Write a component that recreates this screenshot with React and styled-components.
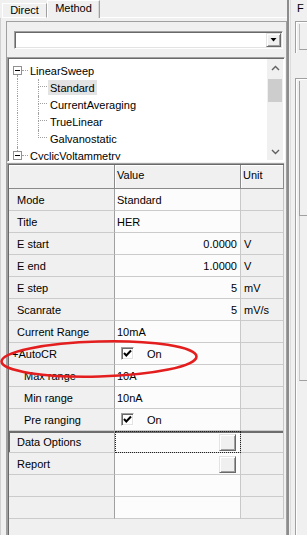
import React from 'react';
import styled, { createGlobalStyle } from 'styled-components';

const GlobalStyle = createGlobalStyle`
  html, body { margin: 0; padding: 0; background: #f0f0f0; }
  body {
    font-family: "Liberation Sans", Arial, sans-serif;
    font-size: 11px;
    color: #000;
  }
  #root { width: 307px; height: 535px; overflow: hidden; }
  * { box-sizing: border-box; }
`;

const Window = styled.div`
  position: relative;
  display: flex;
  width: 307px;
  height: 535px;
  overflow: hidden;
  background: #f0f0f0;
`;

const LeftPane = styled.div`
  display: flex;
  flex-direction: column;
  width: 287px;
  flex-shrink: 0;
`;

const TabStrip = styled.div`
  display: flex;
  align-items: flex-end;
  height: 18px;
  padding-left: 2px;
`;

const Tab = styled.div`
  display: flex;
  align-items: center;
  justify-content: center;
  width: ${(p) => p.$w}px;
  height: ${(p) => (p.$active ? 18 : 15)}px;
  padding-bottom: ${(p) => (p.$active ? 3 : 1)}px;
  background: #f0f0f0;
  border-top: 1px solid #fff;
  border-left: 1px solid #fff;
  border-right: 1px solid #a0a0a0;
  border-bottom: ${(p) => (p.$active ? 'none' : '1px solid #fff')};
  box-shadow: ${(p) => (p.$active ? 'inset -1px 0 0 #d8d8d8' : 'none')};
`;

const TabFill = styled.div`
  flex: 1;
  height: 18px;
  border-bottom: 1px solid #fff;
`;

const Page = styled.div`
  flex: 1;
  display: flex;
  flex-direction: column;
  min-height: 0;
  border-left: 1px solid #d0d0d0;
  padding: 3px 0 0 5px;
`;

const Panel = styled.div`
  flex: 1;
  display: flex;
  flex-direction: column;
  min-height: 0;
  border-top: 1px solid #a0a0a0;
  border-left: 1px solid #a0a0a0;
  border-right: 1px solid #a0a0a0;
`;

const Combo = styled.div`
  display: flex;
  align-items: center;
  justify-content: flex-end;
  height: 18px;
  margin: 9px 3px 8px 7px;
  padding-right: 1px;
  background: #fff;
  border-top: 1px solid #a0a0a0;
  border-left: 1px solid #a0a0a0;
  border-right: 1px solid #fff;
  border-bottom: 1px solid #fff;
  box-shadow: inset 1px 1px 0 #696969, inset -1px -1px 0 #e3e3e3;
`;

const ComboButton = styled.div`
  display: flex;
  align-items: center;
  justify-content: center;
  width: 15px;
  height: 14px;
  background: #f0f0f0;
  border-top: 1px solid #e3e3e3;
  border-left: 1px solid #e3e3e3;
  border-right: 1px solid #696969;
  border-bottom: 1px solid #696969;
  box-shadow: inset 1px 1px 0 #fff, inset -1px -1px 0 #a0a0a0;
`;

const TreeBox = styled.div`
  display: flex;
  height: 105px;
  margin-right: 1px;
  padding: 1px;
  background: #fff;
  border-top: 1px solid #a0a0a0;
  border-left: 1px solid #a0a0a0;
  border-right: 1px solid #fff;
  border-bottom: 1px solid #fff;
  box-shadow: inset 1px 1px 0 #696969;
  overflow: hidden;
`;

const TreeList = styled.div`
  flex: 1;
  padding-top: 3px;
  overflow: hidden;
`;

const TreeRow = styled.div`
  display: flex;
  align-items: stretch;
  height: 17px;
  padding-left: ${(p) => p.$pad}px;
  white-space: nowrap;
`;

const BoxCol = styled.div`
  display: flex;
  flex-direction: column;
  align-items: flex-start;
  width: 9px;
`;

const VSeg = styled.div`
  margin-left: 4px;
  border-left: 1px dotted ${(p) => (p.$on ? '#a0a0a0' : 'transparent')};
  height: ${(p) => (p.$h ? `${p.$h}px` : 'auto')};
  flex: ${(p) => (p.$h ? '0 0 auto' : '1')};
`;

const ExpandBox = styled.div`
  display: flex;
  align-items: center;
  justify-content: center;
  width: 9px;
  height: 9px;
  border: 1px solid #919191;
  background: #fff;
  &::before {
    content: '';
    width: 5px;
    height: 1px;
    background: #000;
  }
`;

const HDots = styled.div`
  align-self: center;
  width: ${(p) => p.$w}px;
  border-top: 1px dotted #a0a0a0;
  margin-right: ${(p) => p.$gap}px;
`;

const Guide = styled.div`
  width: 21px;
  border-left: 1px dotted #a0a0a0;
`;

const Elbow = styled.div`
  display: flex;
  flex-direction: column;
  width: 9px;
`;

const ElbowTop = styled.div`
  height: 8px;
  border-left: 1px dotted #a0a0a0;
  border-bottom: 1px dotted #a0a0a0;
`;

const ElbowBottom = styled.div`
  flex: 1;
  border-left: 1px dotted ${(p) => (p.$on ? '#a0a0a0' : 'transparent')};
`;

const TreeLabel = styled.div`
  display: flex;
  align-items: center;
  margin-left: 1px;
  padding: 0 2px;
  height: 15px;
  align-self: center;
  background: ${(p) => (p.$selected ? '#e3e3e3' : 'transparent')};
`;

const RootLabel = styled.div`
  display: flex;
  align-items: center;
`;

const ScrollBar = styled.div`
  display: flex;
  flex-direction: column;
  width: 16px;
  background: #f0f0f0;
`;

const ScrollButton = styled.div`
  display: flex;
  align-items: center;
  justify-content: center;
  height: 17px;
`;

const Thumb = styled.div`
  height: 23px;
  margin: 3px 1px 0;
  background: #cdcdcd;
`;

const ScrollSpace = styled.div`
  flex: 1;
`;

const Grid = styled.div`
  flex: 1;
  display: grid;
  grid-template-columns: 106px 126px 43px;
  grid-template-rows: 24px;
  grid-auto-rows: 22px;
  align-content: start;
  margin: 1px 2px 0 0;
  padding: 1px 0 0 1px;
  border-top: 1px solid #a0a0a0;
  border-left: 1px solid #a0a0a0;
  box-shadow: inset 1px 1px 0 #696969;
`;

const HeaderCell = styled.div`
  display: flex;
  align-items: center;
  padding: 0 0 4px 2px;
  background: #f0f0f0;
  border-right: 1px solid #8a8a8a;
  border-bottom: 1px solid #8a8a8a;
  box-shadow: inset 1px 1px 0 #fff;
`;

const Cell = styled.div`
  display: flex;
  align-items: center;
  min-width: 0;
  white-space: nowrap;
  border-bottom: 1px solid #cbcbcb;
`;

const NameCell = styled(Cell)`
  padding-left: ${(p) => p.$indent}px;
  background: #f0f0f0;
  border-right: 1px solid #a0a0a0;
  box-shadow: ${(p) =>
    p.$selected ? 'inset 0 2px 0 #6d6d6d, inset 1px 0 0 #6d6d6d' : 'none'};
`;

const ValueCell = styled(Cell)`
  justify-content: ${(p) => (p.$right ? 'flex-end' : 'flex-start')};
  padding: 0 3px 0 2px;
  background: #fcfcfc;
  border-right: 1px solid #c8c8c8;
  box-shadow: ${(p) => (p.$selected ? 'inset 0 2px 0 #6d6d6d' : 'none')};
  outline: ${(p) => (p.$focus ? '1px dotted #222' : 'none')};
  outline-offset: -1px;
`;

const UnitCell = styled(Cell)`
  padding-left: 3px;
  background: #f0f0f0;
  border-right: 1px solid #c8c8c8;
  box-shadow: ${(p) => (p.$selected ? 'inset 0 2px 0 #6d6d6d' : 'none')};
`;

const CheckBox = styled.div`
  display: flex;
  align-items: center;
  justify-content: center;
  width: 13px;
  height: 13px;
  margin-left: 4px;
  background: #fff;
  border-top: 1px solid #a0a0a0;
  border-left: 1px solid #a0a0a0;
  border-right: 1px solid #fff;
  border-bottom: 1px solid #fff;
  box-shadow: inset 1px 1px 0 #696969, inset -1px -1px 0 #e3e3e3;
`;

const CheckText = styled.span`
  margin-left: 13px;
`;

const DotsButton = styled.div`
  width: 17px;
  height: 17px;
  margin: 1px 1px 0 auto;
  background: #f0f0f0;
  border-top: 1px solid #e3e3e3;
  border-left: 1px solid #e3e3e3;
  border-right: 1px solid #696969;
  border-bottom: 1px solid #696969;
  box-shadow: inset 1px 1px 0 #fff, inset -1px -1px 0 #a0a0a0;
`;

const Splitter = styled.div`
  width: 4px;
  flex-shrink: 0;
  border-left: 2px solid #8c8c8c;
  border-right: 1px solid #dcdcdc;
`;

const RightPane = styled.div`
  flex: 1;
  display: flex;
  flex-direction: column;
  min-width: 0;
`;

const RightLabel = styled.div`
  height: 16px;
  padding: 2px 0 0 6px;
  line-height: 13px;
`;

const RightBox = styled.div`
  display: flex;
  margin: ${(p) => p.$mt}px 0 0 4px;
  height: ${(p) => (p.$h ? `${p.$h}px` : 'auto')};
  flex: ${(p) => (p.$h ? '0 0 auto' : '1')};
  border-top: 1px solid #a0a0a0;
  border-left: 1px solid #a0a0a0;
  box-shadow: inset 1px 1px 0 #fff;
`;

const RightColumn = styled.div`
  display: flex;
  flex-direction: column;
  margin: 2px 0 0 3px;
  flex: 1;
`;

const RightSlot = styled.div`
  height: ${(p) => p.$h}px;
  border-left: 1px solid ${(p) => p.$c};
  border-bottom: 1px solid #a0a0a0;
  border-top: ${(p) => (p.$top ? '1px solid #a0a0a0' : 'none')};
`;

const Annotation = styled.svg`
  position: absolute;
  left: 0;
  top: 338px;
  pointer-events: none;
`;

const Chevron = ({ up }) => (
  <svg width="9" height="6" viewBox="0 0 9 6">
    <polyline
      points={up ? '1,5 4.5,1.5 8,5' : '1,1 4.5,4.5 8,1'}
      fill="none"
      stroke="#606060"
      strokeWidth="1.4"
    />
  </svg>
);

const Check = () => (
  <svg width="9" height="9" viewBox="0 0 9 9">
    <polyline points="1,4 3.3,6.5 8,1.5" fill="none" stroke="#000" strokeWidth="2" />
  </svg>
);

const DropArrow = () => (
  <svg width="7" height="4" viewBox="0 0 7 4">
    <polygon points="0.5,0 6.5,0 3.5,3.5" fill="#000" />
  </svg>
);

const treeChildren = ['Standard', 'CurrentAveraging', 'TrueLinear', 'Galvanostatic'];

const rows = [
  { name: 'Mode', value: 'Standard' },
  { name: 'Title', value: 'HER' },
  { name: 'E start', value: '0.0000', right: true, unit: 'V' },
  { name: 'E end', value: '1.0000', right: true, unit: 'V' },
  { name: 'E step', value: '5', right: true, unit: 'mV' },
  { name: 'Scanrate', value: '5', right: true, unit: 'mV/s' },
  { name: 'Current Range', value: '10mA' },
  { name: '+AutoCR', check: true, indent: 3 },
  { name: 'Max range', value: '10A', indent: 15 },
  { name: 'Min range', value: '10nA', indent: 15 },
  { name: 'Pre ranging', check: true, indent: 15 },
  { name: 'Data Options', button: true, selected: true },
  { name: 'Report', button: true },
  { name: '' },
  { name: '' },
];

export default function App() {
  return (
    <>
      <GlobalStyle />
      <Window>
        <LeftPane>
          <TabStrip>
            <Tab $w={45}>Direct</Tab>
            <Tab $w={53} $active>Method</Tab>
            <TabFill />
          </TabStrip>
          <Page>
            <Panel>
              <Combo>
                <ComboButton>
                  <DropArrow />
                </ComboButton>
              </Combo>

              <TreeBox>
                <TreeList>
                  <TreeRow $pad={4}>
                    <BoxCol>
                      <VSeg $h={4} />
                      <ExpandBox />
                      <VSeg $on />
                    </BoxCol>
                    <HDots $w={6} $gap={2} />
                    <RootLabel>LinearSweep</RootLabel>
                  </TreeRow>
                  {treeChildren.map((c, i) => (
                    <TreeRow key={c} $pad={8}>
                      <Guide />
                      <Elbow>
                        <ElbowTop />
                        <ElbowBottom $on={i < treeChildren.length - 1} />
                      </Elbow>
                      <TreeLabel $selected={i === 0}>{c}</TreeLabel>
                    </TreeRow>
                  ))}
                  <TreeRow $pad={4}>
                    <BoxCol>
                      <VSeg $h={4} $on />
                      <ExpandBox />
                      <VSeg $on />
                    </BoxCol>
                    <HDots $w={6} $gap={2} />
                    <RootLabel>CyclicVoltammetry</RootLabel>
                  </TreeRow>
                </TreeList>
                <ScrollBar>
                  <ScrollButton>
                    <Chevron up />
                  </ScrollButton>
                  <Thumb />
                  <ScrollSpace />
                  <ScrollButton>
                    <Chevron />
                  </ScrollButton>
                </ScrollBar>
              </TreeBox>

              <Grid>
                <HeaderCell />
                <HeaderCell>Value</HeaderCell>
                <HeaderCell>Unit</HeaderCell>
                {rows.map((r, i) => (
                  <React.Fragment key={i}>
                    <NameCell $indent={r.indent ?? 8} $selected={r.selected}>
                      {r.name}
                    </NameCell>
                    <ValueCell $right={r.right} $selected={r.selected} $focus={r.selected}>
                      {r.check ? (
                        <>
                          <CheckBox>
                            <Check />
                          </CheckBox>
                          <CheckText>On</CheckText>
                        </>
                      ) : r.button ? (
                        <DotsButton />
                      ) : (
                        r.value
                      )}
                    </ValueCell>
                    <UnitCell $selected={r.selected}>{r.unit}</UnitCell>
                  </React.Fragment>
                ))}
              </Grid>
            </Panel>
          </Page>
        </LeftPane>

        <Splitter />

        <RightPane>
          <RightLabel>F</RightLabel>
          <RightBox $mt={5} $h={32}>
            <RightColumn>
              <RightSlot $h={26} $c="#c0c0c0" />
            </RightColumn>
          </RightBox>
          <RightBox $mt={25}>
            <RightColumn>
              <RightSlot $h={135} $c="#a0a0a0" />
              <RightSlot $h={165} $c="#c8c8c8" />
            </RightColumn>
          </RightBox>
        </RightPane>

        <Annotation width="202" height="44" viewBox="0 0 202 44">
          <ellipse
            cx="99"
            cy="21"
            rx="97.5"
            ry="17.5"
            fill="none"
            stroke="#e41e1e"
            strokeWidth="2.6"
            transform="rotate(-1.5 99 21)"
          />
        </Annotation>
      </Window>
    </>
  );
}
